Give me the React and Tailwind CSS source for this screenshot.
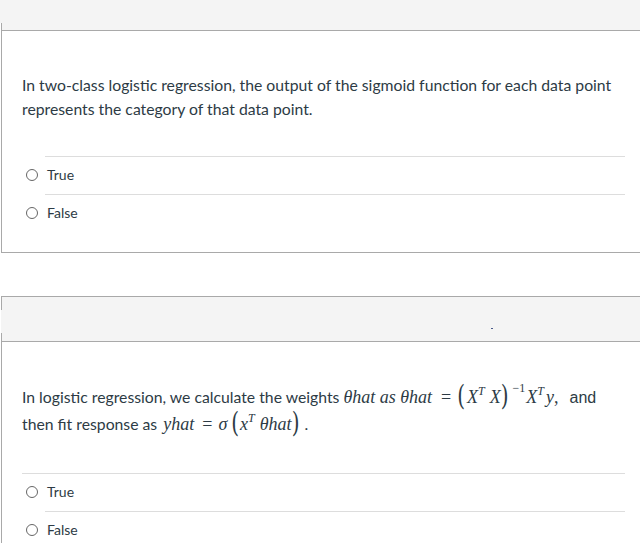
import React from "react"

const font = { fontFamily: "Lato, 'Noto Sans', sans-serif" }
const serif = { fontFamily: "'Liberation Serif', 'DejaVu Serif', serif" }

function Radio({ label, lineLeft }) {
  return (
    <div>
      <div className={`h-px bg-[#dddddd] mr-[15px] ${lineLeft}`} />
      <label className="flex items-center h-[37px] pl-[24px] pb-[2px]">
        <span className="w-[12px] h-[12px] rounded-full border border-[#666] bg-white" />
        <span className="ml-[9px] text-[14px] text-[#2d3b45]">{label}</span>
      </label>
    </div>
  )
}

// inline math pieces, kept at line-height 0 so they don't push the lines apart
function I({ children, className = "" }) {
  return (
    <span className={`italic text-[18px] leading-[0] ${className}`} style={serif}>
      {children}
    </span>
  )
}

function R({ children, className = "" }) {
  return (
    <span className={`text-[18px] leading-[0] ${className}`} style={serif}>
      {children}
    </span>
  )
}

function Sup({ children, top = "-top-[8px]", className = "" }) {
  return <span className={`relative ${top} text-[12px] italic ${className}`}>{children}</span>
}

function Paren({ children, className = "" }) {
  return (
    <span
      className={`inline-block text-[20px] leading-[0] scale-y-[1.35] ${className}`}
      style={{ fontFamily: "'DejaVu Serif', serif" }}
    >
      {children}
    </span>
  )
}

export default function App() {
  return (
    <div className="w-[640px] h-[543px] overflow-hidden bg-white text-[#2d3b45]" style={font}>
      {/* question 1 */}
      <div className="h-[23px] bg-[#f4f4f4]" />
      <div className="h-[7px] bg-[#f4f4f4] ml-px border-l border-[#a9a9a9]" />
      <div className="ml-px h-px bg-[#a9a9a9]" />
      <div className="ml-px border-l border-b border-[#a9a9a9] h-[222px] pt-[42px]">
        <p className="pl-[20px] text-[15.75px] leading-[24px]">
          In two-class logistic regression, the output of the sigmoid function for each data point represents the category of that data point.
        </p>
        <div className="mt-[35px]">
          <Radio label="True" lineLeft="ml-[43px]" />
          <Radio label="False" lineLeft="ml-[43px]" />
        </div>
      </div>

      {/* question 2 */}
      <div className="mt-[43px] ml-px h-px bg-[#a9a9a9]" />
      <div className="relative ml-px h-[44px] bg-[#f4f4f4]">
        <div className="absolute left-0 top-0 h-[13px] w-px bg-[#a9a9a9]" />
        <div className="absolute left-0 top-[36px] h-[8px] w-px bg-[#a9a9a9]" />
        <div className="absolute left-[490px] top-[31px] h-px w-[2px] bg-[#4a5a8a]" />
      </div>
      <div className="ml-px h-px bg-[#a9a9a9]" />
      <div className="ml-px border-l border-[#a9a9a9] h-[300px] pt-[42px]">
        <p className="pl-[20px] text-[15.75px] leading-[26px]">
          In logistic regression, we calculate the weights{" "}
          <I>θhat as θhat</I>
          <R className="ml-[9px] mr-[6px]">=</R>
          <Paren>(</Paren>
          <I className="ml-[2px]">X<Sup className="mr-[5px]">T</Sup>X</I>
          <Paren>)</Paren>
          <I>
            <Sup top="-top-[11px]" className="not-italic ml-[4px] mr-[1px]">−1</Sup>X<Sup className="mr-[2px]">T</Sup>y
          </I>
          <R>,</R>
          <span className="ml-[11px] text-[16px]" style={{ fontFamily: "'Liberation Sans', sans-serif" }}>and</span>
          <br />
          then fit response as{" "}
          <I className="ml-[2px]">yhat</I>
          <R className="ml-[8px] mr-[6px]">=</R>
          <I>σ</I>
          <Paren className="ml-[4px]">(</Paren>
          <I className="ml-[1px]">x<Sup className="mr-[5px]">T</Sup>θhat</I>
          <Paren>)</Paren>
          <span className="ml-[5px]">.</span>
        </p>
        <div className="mt-[36px]">
          <Radio label="True" lineLeft="ml-[20px]" />
          <Radio label="False" lineLeft="ml-[43px]" />
        </div>
      </div>
    </div>
  )
}
